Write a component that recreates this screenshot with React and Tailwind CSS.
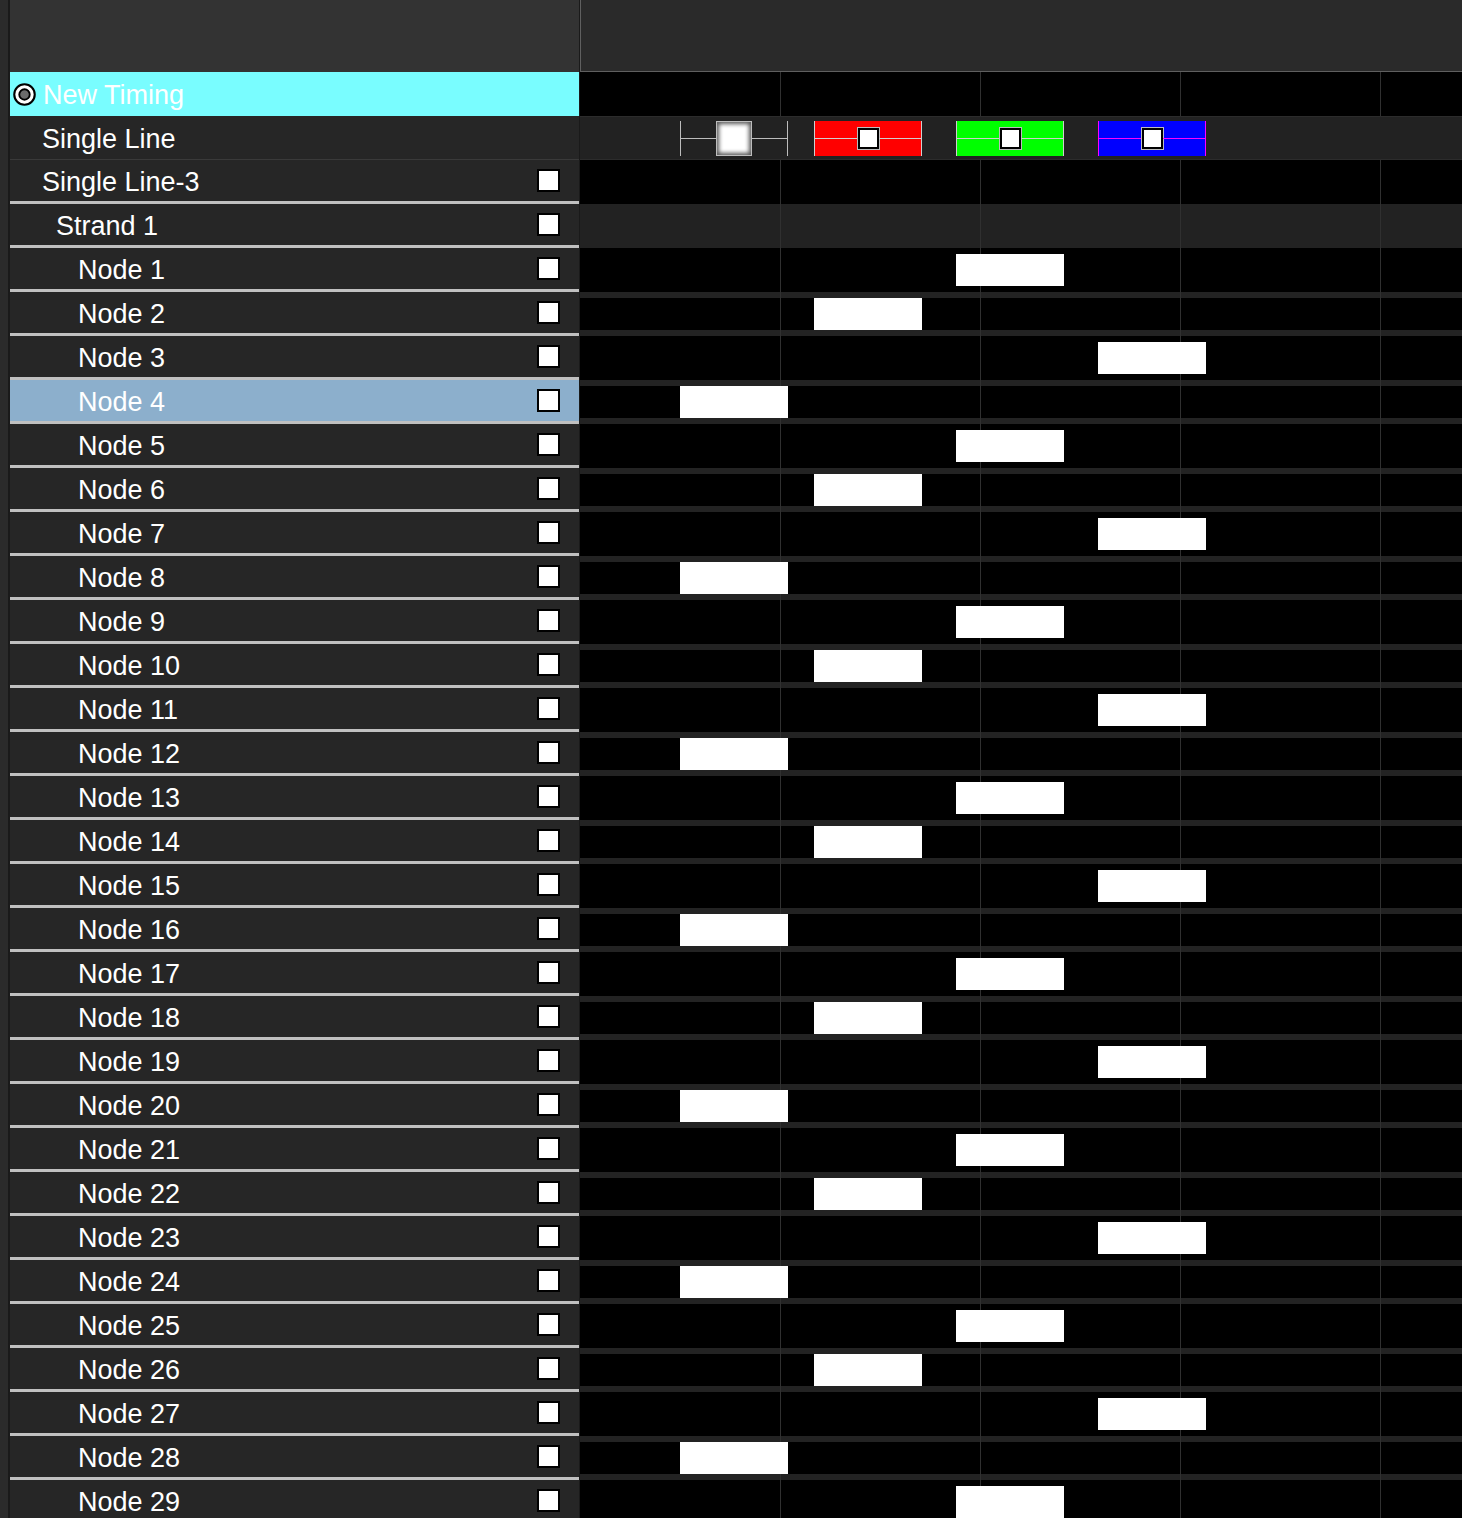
import React from "react";

const blockPos = ["ml-[376px]", "ml-[234px]", "ml-[518px]", "ml-[100px]"];

const nodes = Array.from({ length: 29 }, (_, i) => i + 1);

const Check = () => (
  <div className="w-[23px] h-[23px] bg-white border-2 border-black shrink-0" />
);

const LeftRow = ({ label, pad, check = true, sep = true, selected = false }) => (
  <div className="h-[44px] flex flex-col shrink-0">
    <div
      className={
        "flex-1 flex items-center justify-between pr-[19px] " +
        (selected ? "bg-[#8cafcc]" : "bg-[#262626]")
      }
    >
      <span className={pad + " pt-[3px] text-white text-[27px] leading-none"}>{label}</span>
      {check && <Check />}
    </div>
    {sep && <div className="h-[3px] bg-[#c0c0c0]" />}
  </div>
);

const Block = ({ n }) => (
  <div className={blockPos[(n - 1) % 4] + " relative z-10 w-[108px] h-[32px] bg-white shrink-0"} />
);

const ColorEffect = ({ bg, edge, line, ml }) => (
  <div className={ml + " flex items-center w-[108px] h-[35px] border-x shrink-0 " + bg + " " + edge}>
    <div className={"flex-1 h-px " + line} />
    <div className="w-[21px] h-[21px] bg-white border-2 border-black shadow-[0_0_0_1px_#bdbdbd]" />
    <div className={"flex-1 h-px " + line} />
  </div>
);

export default function App() {
  return (
    <div className="flex w-full h-[1518px] overflow-hidden bg-[#2b2b2b] font-['Liberation_Sans',Arial,sans-serif]">
      {/* edge strip */}
      <div className="w-[10px] shrink-0 bg-[#2b2b2b] border-r-2 border-[#1a1a1a]" />

      {/* tree */}
      <div className="w-[570px] shrink-0 flex flex-col border-r border-[#1a1a1a]">
        <div className="h-[72px] shrink-0 bg-[#333]" />
        <div className="h-[44px] shrink-0 bg-[#79fdff] flex items-center pl-[3px] gap-[7px]">
          <svg width="23" height="23" viewBox="0 0 22 22">
            <circle cx="11" cy="11" r="9.8" fill="#fff" stroke="#000" strokeWidth="2" />
            <circle cx="11" cy="11" r="5" fill="#6b6b6b" stroke="#000" strokeWidth="1.8" />
          </svg>
          <span className="pt-[3px] text-white text-[27px] leading-none">New Timing</span>
        </div>
        <div className="h-[44px] shrink-0 bg-[#262626] border-b border-[#3a3a3a] flex items-center">
          <span className="pl-[32px] pt-[3px] text-white text-[27px] leading-none">Single Line</span>
        </div>
        <LeftRow label="Single Line-3" pad="pl-[32px]" />
        <LeftRow label="Strand 1" pad="pl-[46px]" />
        {nodes.map((n) => (
          <LeftRow key={n} label={"Node " + n} pad="pl-[68px]" selected={n === 4} />
        ))}
      </div>

      {/* timeline */}
      <div className="flex-1 flex flex-col min-w-0">
        <div className="h-[72px] shrink-0 bg-[#2a2a2a] border-l border-b border-[#5f5f5f]" />
        <div className="relative flex-1 bg-black">
          <div className="absolute top-0 bottom-0 left-[200px] w-px bg-[#303030]" />
          <div className="absolute top-0 bottom-0 left-[400px] w-px bg-[#303030]" />
          <div className="absolute top-0 bottom-0 left-[600px] w-px bg-[#303030]" />
          <div className="absolute top-0 bottom-0 left-[800px] w-px bg-[#303030]" />

          <div className="h-[44px]" />
          <div className="relative z-10 h-[44px] bg-[#222] border-y border-[#2c2c2c] flex items-center">
            <div className="ml-[100px] flex items-center w-[108px] h-[35px] border-x border-[#bdbdbd] shrink-0">
              <div className="flex-1 h-px bg-[#bdbdbd]" />
              <div className="w-[36px] h-[35px] bg-white border border-[#bdbdbd] shadow-[inset_0_0_4px_2px_#555]" />
              <div className="flex-1 h-px bg-[#bdbdbd]" />
            </div>
            <ColorEffect ml="ml-[26px]" bg="bg-[#ff0000]" edge="border-[#cfcfcf]" line="bg-[#cfcfcf]" />
            <ColorEffect ml="ml-[34px]" bg="bg-[#00ff00]" edge="border-[#cfcfcf]" line="bg-[#cfcfcf]" />
            <ColorEffect ml="ml-[34px]" bg="bg-[#0000ff]" edge="border-[#ff00ff]" line="bg-[#ff00ff]" />
          </div>
          <div className="h-[44px]" />
          <div className="h-[44px] bg-[#222]" />
          {nodes.map((n) =>
            n % 2 === 1 ? (
              <div key={n} className="h-[44px] pt-[6px] flex">
                <Block n={n} />
              </div>
            ) : (
              <div key={n} className="h-[44px] flex flex-col">
                <div className="h-[6px] bg-[#232323]" />
                <div className="h-[32px] flex">
                  <Block n={n} />
                </div>
                <div className="h-[6px] bg-[#232323]" />
              </div>
            )
          )}
        </div>
      </div>
    </div>
  );
}
